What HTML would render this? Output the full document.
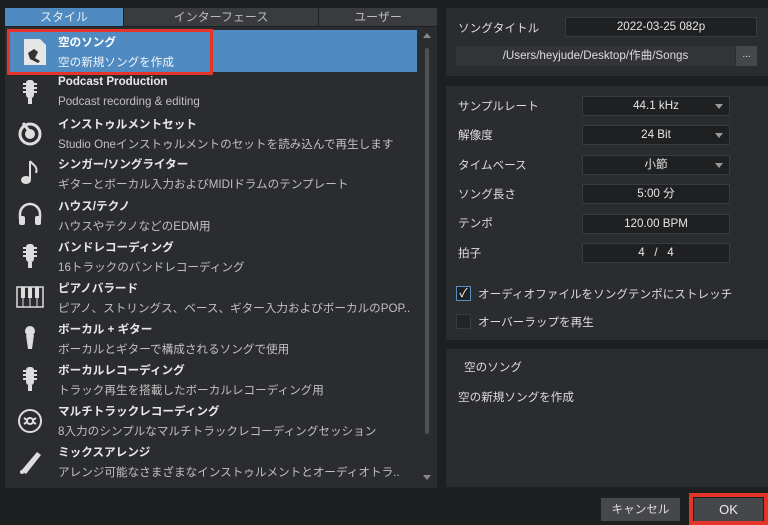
<!DOCTYPE html>
<html><head><meta charset="utf-8"><style>
*{margin:0;padding:0;box-sizing:border-box}
body{width:768px;height:525px;background:#1e1f21;font-family:"Liberation Sans","Noto Sans CJK JP",sans-serif;color:#ddd;position:relative;overflow:hidden;font-size:11.6px}
.abs{position:absolute}
.tab{position:absolute;top:8px;height:18px;line-height:18px;text-align:center;color:#bbb;font-size:12px;background:#3a3b3e}
.list{position:absolute;left:5px;top:27px;width:432px;height:461px;background:#2b2c2f}
.row{position:absolute;left:5px;width:407px;height:41px}
.t{position:absolute;left:53px;top:4px;font-weight:bold;color:#e8e8e8;font-size:11.6px}
.s{position:absolute;left:53px;top:24px;color:#c0c0c0;font-size:11.6px;white-space:nowrap}
.ic{position:absolute;left:12px;top:7px;width:26px;height:28px}
.panel{position:absolute;left:446px;width:322px;background:#2b2c2f}
.lbl{position:absolute;left:12px;color:#ddd;font-size:11.6px}
.fld{position:absolute;background:#1f2022;border:1px solid #3a3b3e;color:#e6e6e6;text-align:center;font-size:11.6px}
.arr{position:absolute;right:6px;top:7px;width:0;height:0;border-left:4px solid transparent;border-right:4px solid transparent;border-top:5px solid #999}
</style></head><body>
<div class="tab" style="left:5px;width:118px;background:#4f8bc0;color:#e8eef5">スタイル</div>
<div class="tab" style="left:124px;width:194px">インターフェース</div>
<div class="tab" style="left:319px;width:118px">ユーザー</div>
<div class="list">
 <div class="abs" style="left:5px;top:3px;width:407px;height:42px;background:#4f8bc0"></div>
 <div class="abs" style="left:418px;top:6px;border-left:4px solid transparent;border-right:4px solid transparent;border-bottom:5px solid #888"></div>
 <div class="abs" style="left:420px;top:21px;width:4px;height:386px;background:#505154;border-radius:2px"></div>
 <div class="abs" style="left:418px;top:448px;border-left:4px solid transparent;border-right:4px solid transparent;border-top:5px solid #888"></div>
</div>
<div class="abs" style="left:7px;top:29px;width:206px;height:46px;border:3px solid #e5352a"></div>

<div class="row" style="left:10px;top:30px">
 <svg class="ic" style="left:12px;top:8px" viewBox="0 0 26 28"><path d="M2 1h16l6 6v20H2z" fill="#e6e6e6"/><path d="M6 15l6-4 4 3-3 6 5 3-2 2-8-4z" fill="#333"/></svg>
 <div class="t" style="left:48px;color:#fff">空のソング</div><div class="s" style="left:48px;color:#f0f4f8">空の新規ソングを作成</div></div>

<div class="panel" style="top:8px;height:68px">
 <div class="lbl" style="top:12px">ソングタイトル</div>
 <div class="fld" style="left:119px;top:9px;width:192px;height:20px;line-height:18px">2022-03-25 082p</div>
 <div class="abs" style="left:10px;top:38px;width:279px;height:20px;background:#333437;line-height:20px;text-align:center;color:#ddd">/Users/heyjude/Desktop/作曲/Songs</div>
 <div class="abs" style="left:290px;top:38px;width:21px;height:20px;background:#46474a;line-height:18px;text-align:center;color:#ddd;font-size:10px">...</div>
</div>
<div class="panel" style="top:86px;height:254px">
 <div class="lbl" style="top:12px">サンプルレート</div><div class="fld" style="left:136px;top:10px;width:148px;height:20px;line-height:18px">44.1 kHz<i class="arr"></i></div>
 <div class="lbl" style="top:41px">解像度</div><div class="fld" style="left:136px;top:39px;width:148px;height:20px;line-height:18px">24 Bit<i class="arr"></i></div>
 <div class="lbl" style="top:71px">タイムベース</div><div class="fld" style="left:136px;top:69px;width:148px;height:20px;line-height:18px">小節<i class="arr"></i></div>
 <div class="lbl" style="top:100px">ソング長さ</div><div class="fld" style="left:136px;top:98px;width:148px;height:20px;line-height:18px">5:00 分</div>
 <div class="lbl" style="top:129px">テンポ</div><div class="fld" style="left:136px;top:128px;width:148px;height:20px;line-height:18px">120.00 BPM</div>
 <div class="lbl" style="top:159px">拍子</div><div class="fld" style="left:136px;top:157px;width:148px;height:20px;line-height:18px">4 &nbsp; / &nbsp; 4</div>
 <div class="abs" style="left:10px;top:200px;width:15px;height:15px;border:1px solid #5a8fc4;background:#1f2022;color:#fff;font-size:12px;line-height:13px;text-align:center">✓</div>
 <div class="lbl" style="left:32px;top:200px">オーディオファイルをソングテンポにストレッチ</div>
 <div class="abs" style="left:10px;top:228px;width:15px;height:15px;border:1px solid #3a3b3e;background:#232426"></div>
 <div class="lbl" style="left:32px;top:228px">オーバーラップを再生</div>
</div>
<div class="panel" style="top:349px;height:138px">
 <div class="lbl" style="left:18px;top:10px">空のソング</div>
 <div class="lbl" style="top:40px">空の新規ソングを作成</div>
</div>
<div class="abs" style="left:601px;top:498px;width:79px;height:23px;background:#46474a;color:#ddd;text-align:center;line-height:23px">キャンセル</div>
<div class="abs" style="left:689px;top:493px;width:79px;height:32px;border:4px solid #e5352a;background:#1e1f21"></div>
<div class="abs" style="left:694px;top:498px;width:69px;height:23px;background:#46474a;color:#eee;text-align:center;line-height:23px;font-size:13px">OK</div>

<div class="row" style="top:71px"><svg class="ic" viewBox="0 0 26 28"><rect x="9" y="2" width="8" height="18" rx="3" fill="#ddd"/><path d="M6 6h14M6 10h14M6 14h14" stroke="#ddd" stroke-width="2"/><rect x="11" y="20" width="4" height="6" fill="#ddd"/></svg><div class="t">Podcast Production</div><div class="s">Podcast recording &amp; editing</div></div>
<div class="row" style="top:112px"><svg class="ic" viewBox="0 0 26 28"><circle cx="13" cy="15" r="10" fill="none" stroke="#ddd" stroke-width="3"/><circle cx="13" cy="15" r="5" fill="#ddd"/><path d="M6 4l7 9" stroke="#ddd" stroke-width="3"/></svg><div class="t">インストゥルメントセット</div><div class="s">Studio Oneインストゥルメントのセットを読み込んで再生します</div></div>
<div class="row" style="top:152px"><svg class="ic" viewBox="0 0 26 28"><path d="M13 2v18" stroke="#ddd" stroke-width="2"/><ellipse cx="9" cy="21" rx="5" ry="4" fill="#ddd"/><path d="M13 2c3 4 8 5 6 12" stroke="#ddd" stroke-width="2" fill="none"/></svg><div class="t">シンガー/ソングライター</div><div class="s">ギターとボーカル入力およびMIDIドラムのテンプレート</div></div>
<div class="row" style="top:194px"><svg class="ic" viewBox="0 0 26 28"><path d="M3 18v-5a10 10 0 0 1 20 0v5" stroke="#ddd" stroke-width="2.5" fill="none"/><rect x="2" y="15" width="6" height="9" rx="2" fill="#ddd"/><rect x="18" y="15" width="6" height="9" rx="2" fill="#ddd"/></svg><div class="t">ハウス/テクノ</div><div class="s">ハウスやテクノなどのEDM用</div></div>
<div class="row" style="top:235px"><svg class="ic" viewBox="0 0 26 28"><rect x="9" y="2" width="8" height="18" rx="3" fill="#ddd"/><path d="M6 6h14M6 10h14M6 14h14" stroke="#ddd" stroke-width="2"/><rect x="11" y="20" width="4" height="6" fill="#ddd"/></svg><div class="t">バンドレコーディング</div><div class="s">16トラックのバンドレコーディング</div></div>
<div class="row" style="top:276px"><svg class="ic" viewBox="0 0 28 28" style="width:30px;left:10px"><rect x="1" y="4" width="26" height="20" fill="none" stroke="#ddd" stroke-width="1.5"/><path d="M7 4v20M14 4v20M21 4v20" stroke="#ddd"/><rect x="5" y="4" width="4" height="11" fill="#ddd"/><rect x="12" y="4" width="4" height="11" fill="#ddd"/><rect x="19" y="4" width="4" height="11" fill="#ddd"/></svg><div class="t">ピアノバラード</div><div class="s">ピアノ、ストリングス、ベース、ギター入力およびボーカルのPOP..</div></div>
<div class="row" style="top:317px"><svg class="ic" viewBox="0 0 26 28"><ellipse cx="13" cy="7" rx="5" ry="5" fill="#ddd"/><path d="M9 11h8l-2 14h-4z" fill="#ddd"/></svg><div class="t">ボーカル + ギター</div><div class="s">ボーカルとギターで構成されるソングで使用</div></div>
<div class="row" style="top:358px"><svg class="ic" viewBox="0 0 26 28"><rect x="9" y="2" width="8" height="18" rx="3" fill="#ddd"/><path d="M6 6h14M6 10h14M6 14h14" stroke="#ddd" stroke-width="2"/><rect x="11" y="20" width="4" height="6" fill="#ddd"/></svg><div class="t">ボーカルレコーディング</div><div class="s">トラック再生を搭載したボーカルレコーディング用</div></div>
<div class="row" style="top:399px"><svg class="ic" viewBox="0 0 26 28"><circle cx="13" cy="15" r="11" fill="none" stroke="#ddd" stroke-width="2"/><circle cx="13" cy="15" r="3" fill="none" stroke="#ddd" stroke-width="2"/><path d="M7 12l3 2M19 18l-3-2M7 18l3-2M19 12l-3 2" stroke="#ddd" stroke-width="2"/></svg><div class="t">マルチトラックレコーディング</div><div class="s">8入力のシンプルなマルチトラックレコーディングセッション</div></div>
<div class="row" style="top:440px"><svg class="ic" viewBox="0 0 26 28"><path d="M4 24L20 5l4 3L9 27z" fill="#ddd"/><circle cx="5" cy="25" r="2" fill="#ddd"/></svg><div class="t">ミックスアレンジ</div><div class="s">アレンジ可能なさまざまなインストゥルメントとオーディオトラ..</div></div>
</body></html>
